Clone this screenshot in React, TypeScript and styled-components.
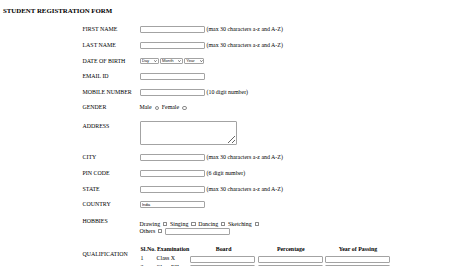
import styled, { createGlobalStyle } from 'styled-components'

const GlobalStyle = createGlobalStyle`
  body {
    margin: 0;
    background: #ffffff;
    color: #000000;
    font-family: "Liberation Serif", "Times New Roman", serif;
  }
`

const Page = styled.div`
  padding: 0 3px;
`

const Title = styled.h3`
  margin: 0;
  padding-top: 7px;
  font-size: 6.85px;
  line-height: 8px;
  font-weight: 700;
`

const Form = styled.form`
  width: 309px;
  margin: 7.2px auto 0;
  display: flex;
  flex-direction: column;
`

const Row = styled.div<{ $h?: number }>`
  display: grid;
  grid-template-columns: 57px 1fr;
  align-items: center;
  height: ${(p) => p.$h ?? 15.6}px;
`

const Label = styled.div<{ $top?: number }>`
  font-size: 5.9px;
  line-height: 7px;
  white-space: nowrap;
  ${(p) => (p.$top !== undefined ? `align-self: start; padding-top: ${p.$top}px;` : '')}
`

const Field = styled.div<{ $top?: number }>`
  display: flex;
  align-items: center;
  font-size: 5.9px;
  line-height: 7px;
  white-space: nowrap;
  ${(p) => (p.$top !== undefined ? `align-self: start; padding-top: ${p.$top}px; flex-direction: column; align-items: flex-start;` : '')}
`

const TextInput = styled.input`
  box-sizing: border-box;
  width: 65px;
  height: 7px;
  margin: 0;
  padding: 0 1.5px;
  border: 1px solid #a3a3a3;
  border-radius: 1px;
  font-family: "Liberation Sans", Arial, sans-serif;
  font-size: 3.8px;
  color: #000;
  background: #fff;
  outline: none;
`

const Hint = styled.span`
  margin-left: 2px;
`

const SelectWrap = styled.span`
  position: relative;
  display: inline-flex;
  margin-right: 1.3px;
`

const Select = styled.select<{ $w: number }>`
  appearance: none;
  box-sizing: border-box;
  width: ${(p) => p.$w}px;
  height: 6.5px;
  margin: 0;
  padding: 0 0 0 1.2px;
  border: 1px solid #a3a3a3;
  border-radius: 1px;
  font-family: "Liberation Sans", Arial, sans-serif;
  font-size: 4.2px;
  line-height: 4.5px;
  background: #fff;
  color: #222;
`

const Arrow = styled.svg`
  position: absolute;
  right: 1.6px;
  top: 2.1px;
  width: 2.8px;
  height: 2.1px;
  pointer-events: none;
`

const Radio = styled.input.attrs({ type: 'radio' })`
  appearance: none;
  box-sizing: border-box;
  width: 4.2px;
  height: 4.2px;
  margin: 0 1.2px 0 1.8px;
  border: 0.7px solid #8a8a8a;
  border-radius: 50%;
  background: #fff;
`

const Check = styled.input.attrs({ type: 'checkbox' })`
  appearance: none;
  box-sizing: border-box;
  width: 4.2px;
  height: 4.2px;
  margin: 0 1.2px 0 1.5px;
  border: 0.7px solid #8a8a8a;
  border-radius: 0.6px;
  background: #fff;
`

const Area = styled.textarea`
  box-sizing: border-box;
  width: 97px;
  height: 24px;
  margin: 0;
  border: 1px solid #a3a3a3;
  border-radius: 1px;
  font-size: 4px;
`

const Line = styled.div`
  display: flex;
  align-items: center;
  height: 7px;
`

const Gap = styled.span`
  display: inline-block;
  width: 1.5px;
`

const Qual = styled.table`
  align-self: start;
  margin-top: 3.9px;
  margin-left: 0.5px;
  border-collapse: separate;
  border-spacing: 0.7px 0;
  font-size: 5.9px;
  line-height: 7px;

  th {
    font-weight: 700;
    height: 9px;
    padding: 0 0.4px;
    white-space: nowrap;
  }
  td {
    height: 9px;
    padding: 0 0.4px;
    white-space: nowrap;
    text-align: left;
  }
`

const exams = ['Class X', 'Class XII', 'Graduation', 'Masters']

function TextRow({ label, hint, value }: { label: string; hint?: string; value?: string }) {
  return (
    <Row>
      <Label>{label}</Label>
      <Field>
        <TextInput type="text" defaultValue={value} />
        {hint && <Hint>{hint}</Hint>}
      </Field>
    </Row>
  )
}

function DropDown({ text, w }: { text: string; w: number }) {
  return (
    <SelectWrap>
      <Select $w={w}>
        <option>{text}</option>
      </Select>
      <Arrow viewBox="0 0 10 7">
        <path d="M1 1.5 L5 5.5 L9 1.5" fill="none" stroke="#111" strokeWidth="2.4" />
      </Arrow>
    </SelectWrap>
  )
}

export default function App() {
  const az = '(max 30 characters a-z and A-Z)'
  return (
    <Page>
      <GlobalStyle />
      <Title>STUDENT REGISTRATION FORM</Title>
      <Form>
        <TextRow label="FIRST NAME" hint={az} />
        <TextRow label="LAST NAME" hint={az} />
        <Row>
          <Label>DATE OF BIRTH</Label>
          <Field>
            <DropDown text="Day" w={19} />
            <DropDown text="Month" w={23} />
            <DropDown text="Year" w={20} />
          </Field>
        </Row>
        <TextRow label="EMAIL ID" />
        <TextRow label="MOBILE NUMBER" hint="(10 digit number)" />
        <Row>
          <Label>GENDER</Label>
          <Field>
            Male
            <Gap />
            <Radio name="g" />
            <Gap />
            Female
            <Gap />
            <Radio name="g" />
          </Field>
        </Row>
        <Row $h={34.4}>
          <Label $top={7.7}>ADDRESS</Label>
          <Field>
            <Area />
          </Field>
        </Row>
        <TextRow label="CITY" hint={az} />
        <TextRow label="PIN CODE" hint="(6 digit number)" />
        <TextRow label="STATE" hint={az} />
        <TextRow label="COUNTRY" value="India" />
        <Row $h={29}>
          <Label $top={5}>HOBBIES</Label>
          <Field $top={8}>
            <Line>
              Drawing<Gap />
              <Check />
              <Gap />
              Singing<Gap />
              <Check />
              <Gap />
              Dancing<Gap />
              <Check />
              <Gap />
              Sketching<Gap />
              <Check />
            </Line>
            <Line>
              Others<Gap />
              <Check />
              <Gap />
              <TextInput type="text" />
            </Line>
          </Field>
        </Row>
        <Row $h={60}>
          <Label $top={9}>QUALIFICATION</Label>
          <Qual>
            <thead>
              <tr>
                <th>Sl.No.</th>
                <th>Examination</th>
                <th>Board</th>
                <th>Percentage</th>
                <th>Year of Passing</th>
              </tr>
            </thead>
            <tbody>
              {exams.map((e, i) => (
                <tr key={e}>
                  <td>{i + 1}</td>
                  <td>{e}</td>
                  <td>
                    <TextInput type="text" />
                  </td>
                  <td>
                    <TextInput type="text" />
                  </td>
                  <td>
                    <TextInput type="text" />
                  </td>
                </tr>
              ))}
            </tbody>
          </Qual>
        </Row>
      </Form>
    </Page>
  )
}
